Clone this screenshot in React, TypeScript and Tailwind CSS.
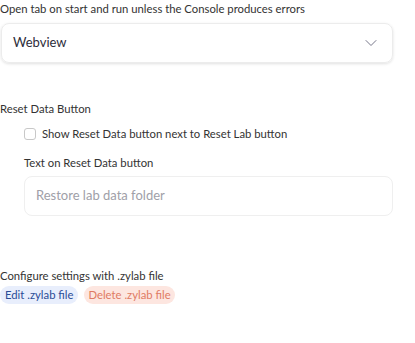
import { ChevronDown } from "lucide-react";

export default function App() {
  return (
    <div className="w-[415px] h-[343px] bg-white text-[#333] font-['Lato',sans-serif] text-[11.3px]">
      <div className="pt-[1px] pr-[22px]">
        <p className="leading-[16px]">Open tab on start and run unless the Console produces errors</p>
        <div className="mt-[6px] ml-[1px] h-[40px] rounded-[8px] border border-[#ececec] shadow-[0_1px_3px_rgba(0,0,0,0.12)] flex items-center justify-between pl-[11px] pr-[11px]">
          <span className="text-[13px] text-[#2d2d3a]">Webview</span>
          <ChevronDown className="w-[20px] h-[20px] text-[#77778a]" strokeWidth={1.2} />
        </div>

        <p className="mt-[38px] leading-[16px]">Reset Data Button</p>
        <div className="pl-[24px]">
          <label className="mt-[9px] flex items-center gap-[6px]">
            <span className="w-[12px] h-[12px] rounded-[3px] border border-[#c8c8c8] bg-white" />
            <span className="leading-[16px]">Show Reset Data button next to Reset Lab button</span>
          </label>
          <p className="mt-[13px] leading-[16px]">Text on Reset Data button</p>
          <div className="mt-[5px] h-[40px] rounded-[8px] border border-[#efefef] flex items-center pl-[11px]">
            <span className="text-[13px] text-[#a0a0a8]">Restore lab data folder</span>
          </div>
        </div>

        <p className="mt-[52px] leading-[16px]">Configure settings with .zylab file</p>
        <div className="mt-[2px] flex gap-[6px]">
          <button className="h-[18px] px-[5px] rounded-full bg-[#e8eefc] text-[#2a4c97] leading-[18px]">Edit .zylab file</button>
          <button className="h-[18px] px-[4px] rounded-full bg-[#fde6e0] text-[#e07b63] leading-[18px]">Delete .zylab file</button>
        </div>
      </div>
    </div>
  );
}
